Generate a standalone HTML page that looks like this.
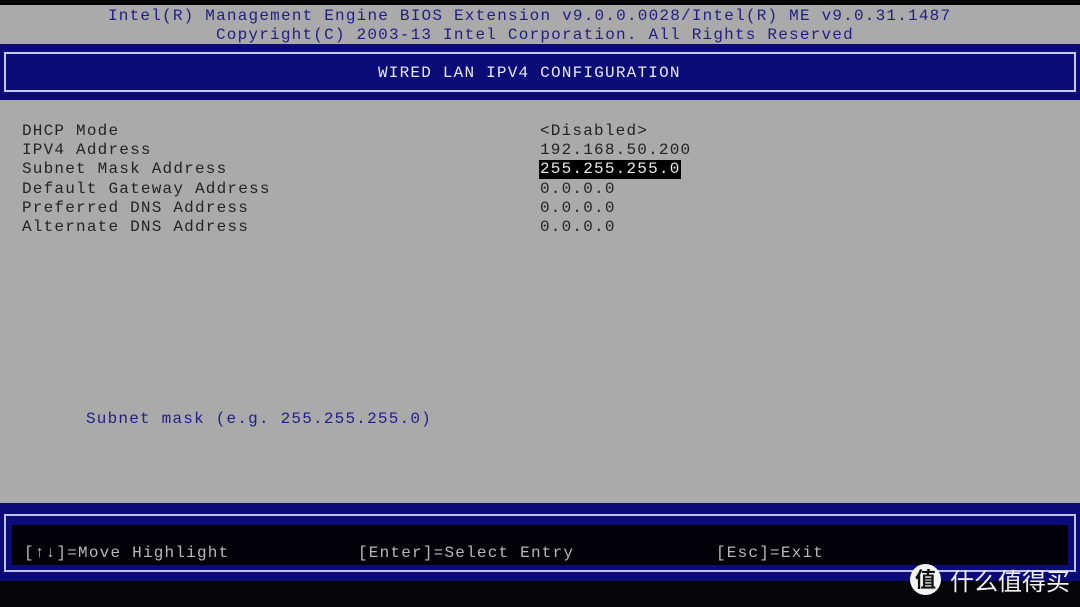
<!DOCTYPE html>
<html><head><meta charset="utf-8"><style>
*{margin:0;padding:0;box-sizing:border-box}
body{width:1080px;height:607px;background:#050508;position:relative;overflow:hidden;font-family:"Liberation Mono",monospace;font-size:16px;letter-spacing:1.21px}
.t{position:absolute;white-space:pre;line-height:19.2px}
#gray{position:absolute;left:0;top:5px;width:1080px;height:498px;background:#aaaaaa}
#hdr{position:absolute;left:0;top:44px;width:1080px;height:56px;background:#0c0c78}
#hbox{position:absolute;left:4px;top:52px;width:1072px;height:40px;border:2px solid #c8c8e8}
#ftr{position:absolute;left:0;top:503px;width:1080px;height:78px;background:#0a0a78}
#fbox{position:absolute;left:4px;top:514px;width:1072px;height:58px;border:2px solid #c0c0e8}
#fin{position:absolute;left:12px;top:525px;width:1056px;height:40px;background:#020208}
.n{color:#1e1e86}.d{color:#232323}
</style></head><body>
<div id="gray"></div>
<div class="t n" style="left:108px;top:7px">Intel(R) Management Engine BIOS Extension v9.0.0.0028/Intel(R) ME v9.0.31.1487</div>
<div class="t n" style="left:216px;top:26px">Copyright(C) 2003-13 Intel Corporation. All Rights Reserved</div>
<div id="hdr"></div><div id="hbox"></div>
<div class="t" style="left:378px;top:64px;color:#e8e8f0">WIRED LAN IPV4 CONFIGURATION</div>
<div class="t d" style="left:22px;top:122px">DHCP Mode
IPV4 Address
Subnet Mask Address
Default Gateway Address
Preferred DNS Address
Alternate DNS Address</div>
<div style="position:absolute;left:539px;top:160px;width:142px;height:19px;background:#000"></div>
<div class="t d" style="left:540px;top:122px">&lt;Disabled&gt;
192.168.50.200
<span style="color:#e8e8e8">255.255.255.0</span>
0.0.0.0
0.0.0.0
0.0.0.0</div>
<div class="t n" style="left:86px;top:410px">Subnet mask (e.g. 255.255.255.0)</div>
<div id="ftr"></div><div id="fbox"></div><div id="fin"></div>
<div class="t" style="left:24px;top:544px;color:#b8b8b8">[↑↓]=Move Highlight</div>
<div class="t" style="left:358px;top:544px;color:#b8b8b8">[Enter]=Select Entry</div>
<div class="t" style="left:716px;top:544px;color:#b8b8b8">[Esc]=Exit</div>
<div style="position:absolute;left:910px;top:564px;width:31px;height:31px;border-radius:50%;background:#f4f4f4;color:#111;font:bold 21px/31px 'Noto Sans CJK SC',sans-serif;text-align:center;letter-spacing:0">值</div>
<div class="t" style="left:950px;top:564px;color:#f4f4f4;font:24px/32px 'Noto Sans CJK SC',sans-serif;letter-spacing:0">什么值得买</div>
</body></html>
